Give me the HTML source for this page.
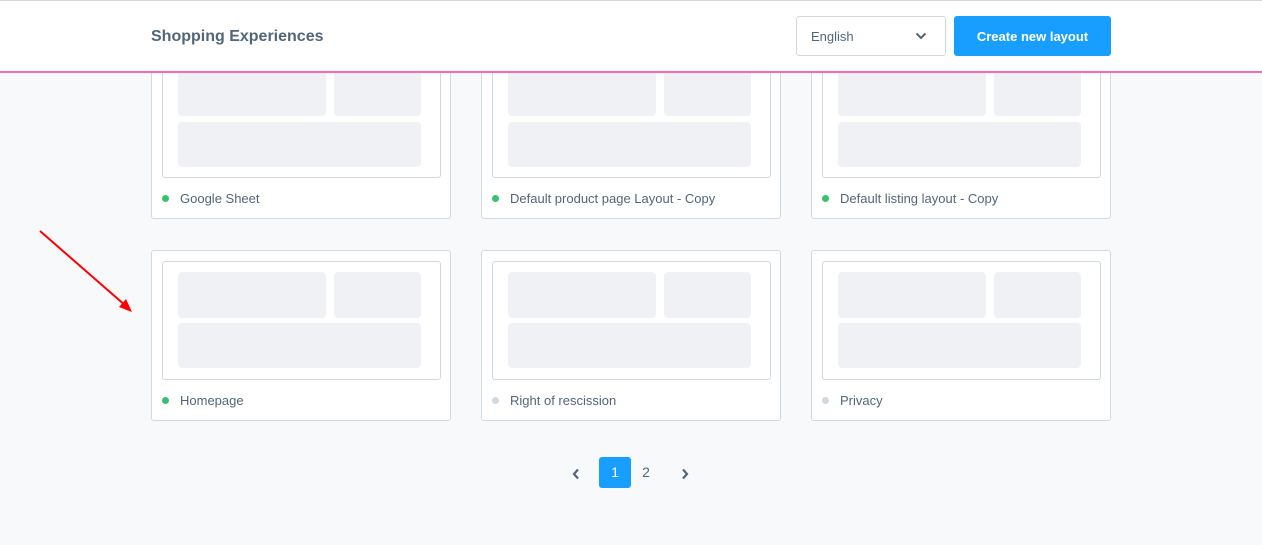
<!DOCTYPE html>
<html><head><style>
*{box-sizing:border-box;margin:0;padding:0}
body{width:1262px;height:545px;background:#f8f9fb;font-family:"Liberation Sans",sans-serif;position:relative;overflow:hidden;color:#52667a}
.card{position:absolute;width:300px;height:171px;background:#fff;border:1px solid #d1d9e0;border-radius:3px}
.pv{position:absolute;left:10px;top:10px;width:279px;height:119px;border:1px solid #d1d9e0;border-radius:3px}
.b{position:absolute;background:#f0f1f4;border-radius:4px}
.lab{position:absolute;left:10px;top:142px;font-size:13px;color:#52667a;display:flex;align-items:center}
.dot{width:7px;height:7px;border-radius:50%;background:#37c171;margin-right:11px}
.g{background:#d1d9e0}
.hdr{position:absolute;left:0;top:0;width:1262px;height:73px;background:#fff;border-top:1px solid #d1d9e0;border-bottom:2px solid #ff68b4;z-index:2}
</style></head><body>
<div class="hdr">
<div style="position:absolute;left:151px;top:27px;font-size:16px;font-weight:bold;color:#52667a">Shopping Experiences</div>
<div style="position:absolute;left:796px;top:15px;width:150px;height:40px;border:1px solid #d1d9e0;border-radius:3px;font-size:13px;padding:12px 14px">English
<svg style="position:absolute;right:18px;top:15px" width="12" height="8" viewBox="0 0 12 8"><path d="M1.5 1.5L6 6L10.5 1.5" stroke="#52667a" stroke-width="2" fill="none"/></svg></div>
<div style="position:absolute;left:954px;top:15px;width:157px;height:40px;background:#189eff;border-radius:3px;color:#fff;font-size:13px;font-weight:bold;text-align:center;line-height:42px">Create new layout</div>
</div>
<div class="card" style="left:151px;top:48px"><div class="pv"><div class="b" style="left:15px;top:10px;width:148px;height:46px"></div><div class="b" style="left:171px;top:10px;width:87px;height:46px"></div><div class="b" style="left:15px;top:62px;width:243px;height:45px"></div></div><div class="lab"><span class="dot"></span>Google Sheet</div></div>
<div class="card" style="left:481px;top:48px"><div class="pv"><div class="b" style="left:15px;top:10px;width:148px;height:46px"></div><div class="b" style="left:171px;top:10px;width:87px;height:46px"></div><div class="b" style="left:15px;top:62px;width:243px;height:45px"></div></div><div class="lab"><span class="dot"></span>Default product page Layout - Copy</div></div>
<div class="card" style="left:811px;top:48px"><div class="pv"><div class="b" style="left:15px;top:10px;width:148px;height:46px"></div><div class="b" style="left:171px;top:10px;width:87px;height:46px"></div><div class="b" style="left:15px;top:62px;width:243px;height:45px"></div></div><div class="lab"><span class="dot"></span>Default listing layout - Copy</div></div>
<div class="card" style="left:151px;top:250px"><div class="pv"><div class="b" style="left:15px;top:10px;width:148px;height:46px"></div><div class="b" style="left:171px;top:10px;width:87px;height:46px"></div><div class="b" style="left:15px;top:61px;width:243px;height:45px"></div></div><div class="lab"><span class="dot"></span>Homepage</div></div>
<div class="card" style="left:481px;top:250px"><div class="pv"><div class="b" style="left:15px;top:10px;width:148px;height:46px"></div><div class="b" style="left:171px;top:10px;width:87px;height:46px"></div><div class="b" style="left:15px;top:61px;width:243px;height:45px"></div></div><div class="lab"><span class="dot g"></span>Right of rescission</div></div>
<div class="card" style="left:811px;top:250px"><div class="pv"><div class="b" style="left:15px;top:10px;width:148px;height:46px"></div><div class="b" style="left:171px;top:10px;width:87px;height:46px"></div><div class="b" style="left:15px;top:61px;width:243px;height:45px"></div></div><div class="lab"><span class="dot g"></span>Privacy</div></div>
<svg style="position:absolute;left:572px;top:468px" width="8" height="12" viewBox="0 0 8 12"><path d="M6 1.5L2 6L6 10.5" stroke="#52667a" stroke-width="2.2" fill="none"/></svg>
<div style="position:absolute;left:599px;top:457px;width:32px;height:31px;background:#189eff;border-radius:3px;color:#fff;font-size:14px;text-align:center;line-height:31px">1</div>
<div style="position:absolute;left:638px;top:457px;width:16px;height:31px;font-size:14px;line-height:31px;text-align:center">2</div>
<svg style="position:absolute;left:681px;top:468px" width="8" height="12" viewBox="0 0 8 12"><path d="M2 1.5L6 6L2 10.5" stroke="#52667a" stroke-width="2.2" fill="none"/></svg>
<svg style="position:absolute;left:0;top:0" width="200" height="340"><line x1="40" y1="231" x2="126" y2="306" stroke="#f00" stroke-width="2"/><path d="M132 312L119 307L126 299Z" fill="#f00"/></svg>
</body></html>
